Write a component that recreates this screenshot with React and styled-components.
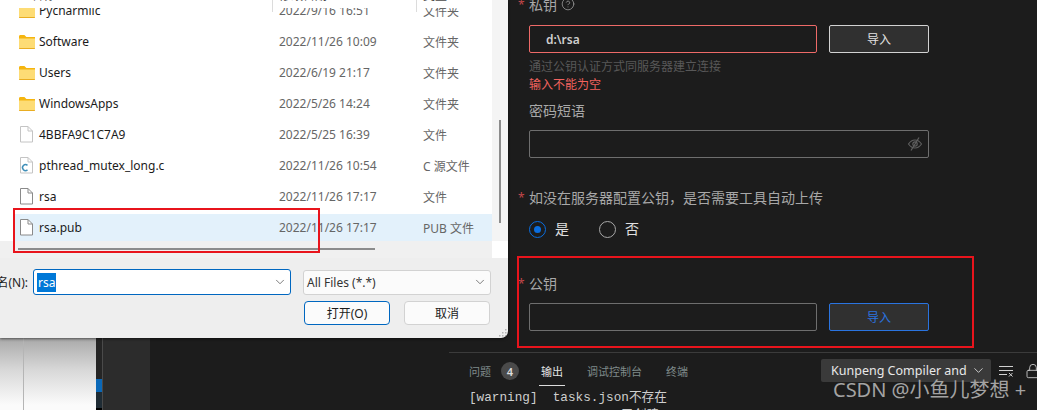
import React from 'react';
import styled, { createGlobalStyle } from 'styled-components';
import { ChevronDown, CircleHelp, Lock } from 'lucide-react';

const UI_FONT = '"Noto Sans", "Noto Sans CJK SC", sans-serif';

const Global = createGlobalStyle`
  html, body { margin: 0; padding: 0; background: #1c1c1c; }
  * { box-sizing: border-box; }
`;

const Page = styled.div`
  position: relative;
  display: flex;
  width: 1037px;
  height: 410px;
  overflow: hidden;
  background: #1c1c1c;
  font-family: ${UI_FONT};
`;

/* what is left of the windows behind the dialog */
const Behind = styled.div`
  display: flex;
  width: 150px;
  flex: none;
`;

const PaleWindow = styled.div`
  width: 96px;
  flex: none;
  background: linear-gradient(to bottom, #a9a9a9 338px, #d8d8d8 370px, #fbfbfb 405px);
  display: flex;
`;

const PaleEdge = styled.div`
  width: 24px;
  border-right: 1px solid #b5b5b5;
`;

const Dock = styled.div`
  width: 7px;
  flex: none;
  display: flex;
  flex-direction: column;
  background: #252525;
  border-right: 1px solid #4a4a4a;
`;

const DockSpace = styled.div`
  height: 379px;
`;

const DockItem = styled.div`
  height: ${p => p.$h}px;
  background: ${p => p.$bg};
`;

const SideBar = styled.div`
  flex: 1;
  background: #2c2c2c;
`;

const EditorGutter = styled.div`
  width: 299px;
  flex: none;
`;

const Main = styled.div`
  flex: 1;
  display: flex;
  flex-direction: column;
  min-width: 0;
`;

const Form = styled.div`
  height: 352px;
  flex: none;
  overflow: hidden;
  display: flex;
  flex-direction: column;
  justify-content: flex-end;
  padding: 0 0 21px 80px;
`;

const Label = styled.div`
  display: flex;
  align-items: center;
  gap: 4px;
  height: 20px;
  flex: none;
  padding-bottom: 2px;
  margin-top: ${p => p.$top || 0}px;
  font-size: 14px;
  color: #a8a8a8;
  white-space: nowrap;
  svg { color: #a0a0a0; }
`;

const Star = styled.span`
  width: 11px;
  margin: 0 -4px 0 -11px;
  color: #c2474a;
  font-size: 12px;
  line-height: 12px;
  padding-top: 1px;
`;

const InputRow = styled.div`
  display: flex;
  gap: 12px;
  flex: none;
  margin-top: ${p => p.$top || 0}px;
`;

const TextBox = styled.div`
  position: relative;
  width: ${p => p.$w}px;
  height: 28px;
  display: flex;
  align-items: center;
  padding-left: 16px;
  border: 1px solid ${p => p.$border || '#6e6e6e'};
  border-radius: 2px;
  font-size: 12px;
  font-weight: 600;
  color: #cfcfcf;
`;

const EyeSlot = styled.svg`
  position: absolute;
  right: 5px;
  top: 5px;
`;

const ImportButton = styled.div`
  width: 100px;
  height: 28px;
  display: flex;
  align-items: center;
  justify-content: center;
  background: #303030;
  border: 1px solid ${p => (p.$active ? '#2a74e0' : '#d2d2d2')};
  border-radius: 2px;
  font-size: 12px;
  color: ${p => (p.$active ? '#2a74e0' : '#e2e2e2')};
`;

const Hint = styled.div`
  height: 16px;
  flex: none;
  padding-top: 2px;
  margin-top: ${p => p.$top || 0}px;
  font-size: 12px;
  line-height: 16px;
  color: ${p => (p.$error ? '#f2635f' : '#585858')};
`;

const RadioRow = styled.div`
  display: flex;
  align-items: center;
  height: 20px;
  flex: none;
  margin-top: 12px;
  margin-bottom: 34px;
`;

const RadioItem = styled.div`
  display: flex;
  align-items: center;
  gap: 9px;
  width: 70px;
  font-size: 14px;
  color: #e0e0e0;
  line-height: 18px;
  padding-bottom: 2px;
`;

const RadioDot = styled.span`
  width: 17px;
  height: 17px;
  border-radius: 50%;
  border: 1px solid ${p => (p.$on ? '#0a6ee0' : '#a8a8a8')};
  display: flex;
  align-items: center;
  justify-content: center;
  &::after {
    content: '';
    width: 7px;
    height: 7px;
    border-radius: 50%;
    background: ${p => (p.$on ? '#0a6ee0' : 'transparent')};
  }
`;

const Panel = styled.div`
  flex: 1;
  border-top: 1px solid #3b3b3b;
  overflow: hidden;
`;

const PanelBar = styled.div`
  display: flex;
  align-items: center;
  height: 30px;
  padding: 6px 0 0 20px;
`;

const Tab = styled.div`
  position: relative;
  font-size: 11px;
  line-height: 32px;
  height: 30px;
  padding: 0 2px;
  margin: 0 ${p => p.$gap ?? 20}px 0 -2px;
  color: ${p => (p.$active ? '#e4e4e4' : '#7f8a8a')};
  border-bottom: 1px solid ${p => (p.$active ? '#dcdcdc' : 'transparent')};
`;

const Badge = styled.span`
  width: 18px;
  height: 18px;
  margin: 0 22px 0 -2px;
  border-radius: 50%;
  background: #4a4a4a;
  color: #dedede;
  font-size: 11px;
  font-weight: 600;
  display: flex;
  align-items: center;
  justify-content: center;
`;

const ChannelSelect = styled.div`
  margin-left: auto;
  width: 170px;
  height: 23px;
  margin-top: -1px;
  display: flex;
  align-items: center;
  justify-content: space-between;
  padding: 0 5px 0 10px;
  background: #3a3a3a;
  border-radius: 2px;
  color: #e8e8e8;
  font-size: 12.5px;
  white-space: nowrap;
`;

const PanelIcons = styled.div`
  display: flex;
  align-items: center;
  gap: 12px;
  width: 46px;
  padding-left: 8px;
  flex: none;
  color: #d0d0d0;
  svg { flex: none; }
`;

const Output = styled.pre`
  margin: 6px 0 0 20px;
  font-family: "Liberation Mono", "Noto Sans CJK SC", monospace;
  font-size: 12.7px;
  line-height: 18px;
  color: #cfcfcf;
`;

const Watermark = styled.div`
  position: absolute;
  left: 833px;
  top: 378px;
  font-size: 20px;
  line-height: 24px;
  color: #a3a3a3;
  white-space: nowrap;
`;

/* file dialog */
const Dialog = styled.div`
  position: absolute;
  left: 0;
  top: 0;
  width: 508px;
  height: 338px;
  background: #eeeeee;
  border-bottom-right-radius: 7px;
  box-shadow: 0 1px 3px rgba(0, 0, 0, 0.55);
  overflow: hidden;
  font-size: 12px;
  color: #1e1e1e;
`;

const Browser = styled.div`
  display: flex;
  height: 258px;
  background: #fff;
`;

const ListColumn = styled.div`
  position: relative;
  width: 492px;
  flex: none;
  display: flex;
  flex-direction: column;
`;

const HeaderRow = styled.div`
  height: 8px;
  flex: none;
  display: flex;
  align-items: flex-end;
  overflow: hidden;
  padding: 0 0 4px 31px;
  color: #4a4a4a;
  background: #fff;
`;

const HeaderCell = styled.span`
  width: ${p => p.$w}px;
  flex: none;
  line-height: 16px;
`;

const HeaderLine = styled.span`
  position: absolute;
  top: 0;
  left: ${p => p.$x}px;
  width: 1px;
  height: 12px;
  background: #dcdcdc;
`;

const FileList = styled.div`
  height: 233px;
  flex: none;
  overflow: hidden;
  display: flex;
  flex-direction: column;
  justify-content: flex-end;
  gap: 4px;
  padding-left: 15px;
`;

const FileRow = styled.div`
  height: 27px;
  flex: none;
  display: flex;
  align-items: center;
  padding-left: 4px;
  background: ${p => (p.$selected ? '#e3f1fb' : 'transparent')};
`;

const IconCell = styled.span`
  width: 20px;
  flex: none;
  display: flex;
`;

const NameCell = styled.span`
  width: 240px;
  flex: none;
  color: #1b1b1b;
`;

const DateCell = styled.span`
  width: 144px;
  flex: none;
  color: #666;
`;

const TypeCell = styled.span`
  color: #666;
`;

const HScroll = styled.div`
  flex: 1;
  background: #f0f0f0;
  padding: 7px 0 0 18px;
`;

const HThumb = styled.div`
  width: 357px;
  height: 2px;
  background: #8c8c8c;
`;

const VScroll = styled.div`
  flex: 1;
  display: flex;
  flex-direction: column;
`;

const VTrack = styled.div`
  height: 241px;
  flex: none;
  background: #f4f4f4;
  padding: 120px 0 0 7px;
`;

const VThumb = styled.div`
  width: 2px;
  height: 103px;
  background: #8c8c8c;
`;

const Footer = styled.div`
  position: relative;
  height: 80px;
  padding-top: 11px;
`;

const FooterRow = styled.div`
  display: flex;
  align-items: center;
  height: ${p => p.$h}px;
  margin-top: ${p => p.$top || 0}px;
`;

const FieldLabel = styled.span`
  width: 33px;
  flex: none;
  display: flex;
  justify-content: flex-end;
  padding-right: 5px;
  white-space: nowrap;
  overflow: hidden;
  color: #1e1e1e;
`;

const NameInput = styled.div`
  width: 258px;
  height: 26px;
  flex: none;
  display: flex;
  align-items: center;
  justify-content: space-between;
  padding: 0 3px 0 3px;
  background: #fff;
  border: 1px solid #0067c0;
  border-radius: 3px;
  color: #555;
`;

const Selected = styled.span`
  background: #0078d7;
  color: #fff;
  line-height: 19px;
  padding: 0 1px;
`;

const TypeSelect = styled.div`
  width: 188px;
  height: 25px;
  margin-left: 12px;
  flex: none;
  display: flex;
  align-items: center;
  justify-content: space-between;
  padding: 0 3px;
  background: #fbfbfb;
  border: 1px solid #d2d2d2;
  border-radius: 3px;
  color: #333;
`;

const DialogButton = styled.div`
  width: 86px;
  height: 24px;
  margin-left: ${p => p.$left}px;
  flex: none;
  display: flex;
  align-items: center;
  justify-content: center;
  background: #fbfbfb;
  border: 1px solid ${p => (p.$primary ? '#0067c0' : '#d2d2d2')};
  border-radius: 4px;
  color: #1b1b1b;
`;

const Grip = styled.svg`
  position: absolute;
  right: 1px;
  bottom: 1px;
`;

/* annotation boxes drawn over the screenshot */
const RedBox = styled.div`
  position: absolute;
  left: ${p => p.$x}px;
  top: ${p => p.$y}px;
  width: ${p => p.$w}px;
  height: ${p => p.$h}px;
  border: 2px solid #e8141c;
  pointer-events: none;
`;

const FolderIcon = () => (
  <svg width="16" height="14" viewBox="0 0 16 14">
    <path d="M0 1.5C0 .7.6 0 1.4 0h4l2 2H16v2H0z" fill="#f5b50f" />
    <path d="M0 3.5h16v9.2c0 .7-.6 1.3-1.3 1.3H1.3C.6 14 0 13.4 0 12.7z" fill="#fddc75" />
    <path d="M0 13h16v.2c0 .5-.5.8-1 .8H1c-.5 0-1-.3-1-.8z" fill="#e9ad22" />
  </svg>
);

const FileIcon = ({ dark, glyph }) => (
  <svg width="14" height="17" viewBox="0 0 14 17">
    <path d="M1.5.5h7.5l4.500 4.500v11h-12z" fill="#fff" stroke={dark ? '#8a8a8a' : '#c4c4c4'} />
    <path d="M9 .5V5h4.500" fill="none" stroke={dark ? '#8a8a8a' : '#c4c4c4'} />
    {glyph && <path d="M8.500 8.300a3 3 0 1 0 0 4.600" fill="none" stroke="#3f8fb8" strokeWidth="1.500" />}
  </svg>
);

const EyeOff = () => (
  <EyeSlot width="16" height="16" viewBox="0 0 16 16" fill="none" stroke="#5f5f5f" strokeWidth="1.200">
    <path d="M1.500 8C3.300 5.300 5.500 4 8 4s4.700 1.300 6.500 4c-1.800 2.700-4 4-6.500 4S3.300 10.700 1.500 8z" />
    <circle cx="8" cy="8" r="2.200" />
    <path d="M12 1.500L4 14.500" />
  </EyeSlot>
);

const ClearIcon = () => (
  <svg width="14" height="14" viewBox="0 0 14 14" fill="none" stroke="#d0d0d0" strokeWidth="1">
    <path d="M0 2.500h14M0 6.500h14M0 10.500h8" />
    <path d="M10 9l3.500 3.500M13.500 9L10 12.500" />
  </svg>
);

const files = [
  { icon: 'folder', name: 'Pycharmlic', date: '2022/9/16 16:51', type: '文件夹' },
  { icon: 'folder', name: 'Software', date: '2022/11/26 10:09', type: '文件夹' },
  { icon: 'folder', name: 'Users', date: '2022/6/19 21:17', type: '文件夹' },
  { icon: 'folder', name: 'WindowsApps', date: '2022/5/26 14:24', type: '文件夹' },
  { icon: 'pale', name: '4BBFA9C1C7A9', date: '2022/5/25 16:39', type: '文件' },
  { icon: 'c', name: 'pthread_mutex_long.c', date: '2022/11/26 10:54', type: 'C 源文件' },
  { icon: 'file', name: 'rsa', date: '2022/11/26 17:17', type: '文件' },
  { icon: 'file', name: 'rsa.pub', date: '2022/11/26 17:17', type: 'PUB 文件', selected: true },
];

const rowIcon = icon => {
  if (icon === 'folder') return <FolderIcon />;
  if (icon === 'c') return <FileIcon glyph />;
  return <FileIcon dark={icon === 'file'} />;
};

const App = () => {
  return (
    <Page>
      <Global />
      <Behind>
        <PaleWindow><PaleEdge /></PaleWindow>
        <Dock>
          <DockSpace />
          <DockItem $h={13} $bg="#0a68b8" />
          <DockItem $h={16} $bg="#1f2c35" />
          <DockItem $h={2} $bg="#000" />
        </Dock>
        <SideBar />
      </Behind>
      <EditorGutter />
      <Main>
        <Form>
          <Label><Star>*</Star>私钥 <CircleHelp size={14} strokeWidth={1.3} /></Label>
          <InputRow $top={10}>
            <TextBox $w={288} $border="#ee6a68">d:\rsa</TextBox>
            <ImportButton>导入</ImportButton>
          </InputRow>
          <Hint $top={4}>通过公钥认证方式同服务器建立连接</Hint>
          <Hint $top={2} $error>输入不能为空</Hint>
          <Label $top={10}>密码短语</Label>
          <InputRow $top={9}>
            <TextBox $w={400}><EyeOff /></TextBox>
          </InputRow>
          <Label $top={30}><Star>*</Star>如没在服务器配置公钥，是否需要工具自动上传</Label>
          <RadioRow>
            <RadioItem><RadioDot $on />是</RadioItem>
            <RadioItem><RadioDot />否</RadioItem>
          </RadioRow>
          <Label><Star>*</Star>公钥</Label>
          <InputRow $top={9}>
            <TextBox $w={288} />
            <ImportButton $active>导入</ImportButton>
          </InputRow>
        </Form>
        <Panel>
          <PanelBar>
            <Tab $gap={10}>问题</Tab>
            <Badge>4</Badge>
            <Tab $active $gap={22}>输出</Tab>
            <Tab $gap={22}>调试控制台</Tab>
            <Tab>终端</Tab>
            <ChannelSelect>Kunpeng Compiler and <ChevronDown size={15} strokeWidth={1.3} /></ChannelSelect>
            <PanelIcons><ClearIcon /><Lock size={16} strokeWidth={1.3} /></PanelIcons>
          </PanelBar>
          <Output>{'[warning]  tasks.json不存在\n                    已创建'}</Output>
        </Panel>
      </Main>

      <Dialog>
        <Browser>
          <ListColumn>
            <HeaderRow>
              <HeaderCell $w={248}>名称</HeaderCell>
              <HeaderCell $w={144}>修改日期</HeaderCell>
              <HeaderCell $w={40}>类型</HeaderCell>
            </HeaderRow>
            <HeaderLine $x={272} />
            <HeaderLine $x={416} />
            <FileList>
              {files.map(file => (
                <FileRow key={file.name} $selected={file.selected}>
                  <IconCell>{rowIcon(file.icon)}</IconCell>
                  <NameCell>{file.name}</NameCell>
                  <DateCell>{file.date}</DateCell>
                  <TypeCell>{file.type}</TypeCell>
                </FileRow>
              ))}
            </FileList>
            <HScroll><HThumb /></HScroll>
          </ListColumn>
          <VScroll>
            <VTrack><VThumb /></VTrack>
          </VScroll>
        </Browser>
        <Footer>
          <FooterRow $h={26}>
            <FieldLabel>文件名(N):</FieldLabel>
            <NameInput>
              <Selected>rsa</Selected>
              <ChevronDown size={14} strokeWidth={1.3} />
            </NameInput>
            <TypeSelect>
              All Files (*.*)
              <ChevronDown size={14} strokeWidth={1.3} color="#555" />
            </TypeSelect>
          </FooterRow>
          <FooterRow $h={24} $top={6}>
            <DialogButton $left={304} $primary>打开(O)</DialogButton>
            <DialogButton $left={14}>取消</DialogButton>
          </FooterRow>
          <Grip width="8" height="8" viewBox="0 0 8 8" fill="#b4b4b4">
            <rect x="6" y="0" width="1.500" height="1.500" />
            <rect x="3" y="3" width="1.500" height="1.500" />
            <rect x="6" y="3" width="1.500" height="1.500" />
            <rect x="0" y="6" width="1.500" height="1.500" />
            <rect x="3" y="6" width="1.500" height="1.500" />
            <rect x="6" y="6" width="1.500" height="1.500" />
          </Grip>
        </Footer>
      </Dialog>

      <RedBox $x={13} $y={208} $w={307} $h={45} />
      <RedBox $x={517} $y={256} $w={457} $h={92} />
      <Watermark>CSDN @小鱼儿梦想 +</Watermark>
    </Page>
  );
};

export default App;
